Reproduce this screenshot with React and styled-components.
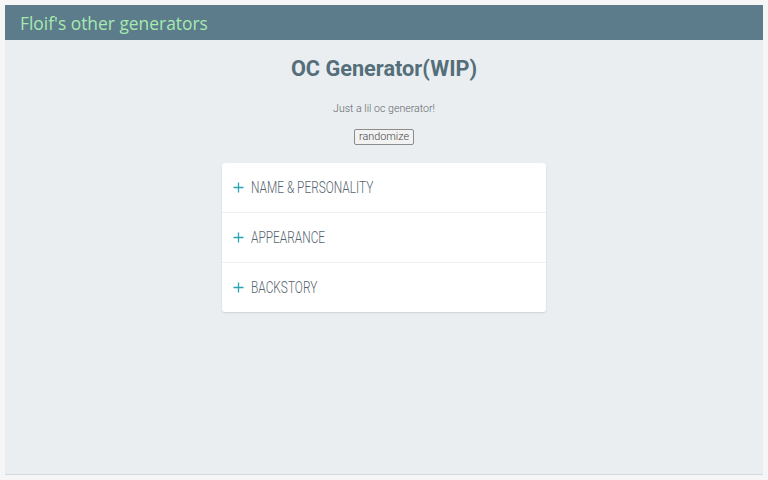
import React from 'react'
import styled, { createGlobalStyle } from 'styled-components'

const GlobalStyle = createGlobalStyle`
  html, body {
    margin: 0;
    padding: 0;
    background: #f6f6f6;
  }
  body {
    padding: 5px;
    font-family: Roboto, "Liberation Sans", sans-serif;
  }
`;

const Page = styled.div`
  height: 470px;
  display: flex;
  flex-direction: column;
  background: #eaeef1;
  border-bottom: 1px solid #d6d9dc;
  box-sizing: border-box;
`;

const TopBar = styled.div`
  height: 35px;
  background: #5c7b8b;
  display: flex;
  align-items: center;
  padding: 0 15px;
  color: #a6eab0;
  font-family: "Open Sans", sans-serif;
  font-size: 17.4px;
`;

const Main = styled.div`
  display: flex;
  flex-direction: column;
  align-items: center;
  padding-top: 14px;
`;

const Title = styled.h1`
  margin: 0;
  font-family: Roboto, sans-serif;
  font-weight: 700;
  font-size: 21.7px;
  color: #546e7a;
  line-height: 30px;
`;

const Subtitle = styled.p`
  margin: 18px 0 0;
  font-family: Roboto, sans-serif;
  font-weight: 300;
  font-size: 10.6px;
  color: #5f666b;
`;

const RandomButton = styled.button`
  margin-top: 14px;
  font-family: Roboto, sans-serif;
  font-weight: 300;
  font-size: 10.8px;
  color: #444;
  background: #f2f2f2;
  border: 1px solid #8c8c8c;
  border-radius: 2px;
  padding: 1px 4px;
  line-height: 12px;
`;

const Card = styled.div`
  margin-top: 18px;
  width: 324px;
  background: #fff;
  border-radius: 3px;
  box-shadow: 0 1px 2px rgba(0, 0, 0, 0.12);
  display: flex;
  flex-direction: column;
`;

const Row = styled.div`
  height: 49px;
  display: flex;
  align-items: center;
  gap: 7px;
  padding-left: 11px;
  border-top: ${p => (p.$first ? 'none' : '1px solid #edf0f2')};
`;

const Plus = styled.svg`
  width: 11px;
  height: 11px;
  flex: none;
`;

const Label = styled.span`
  font-family: Roboto, sans-serif;
  font-weight: 300;
  font-size: 16.5px;
  color: #56646e;
  transform: scaleX(0.72);
  transform-origin: left center;
  white-space: nowrap;
`;

const sections = ['NAME & PERSONALITY', 'APPEARANCE', 'BACKSTORY']

const App = () => {
  return (
    <>
      <GlobalStyle />
      <Page>
        <TopBar>Floif's other generators</TopBar>
        <Main>
          <Title>OC Generator(WIP)</Title>
          <Subtitle>Just a lil oc generator!</Subtitle>
          <RandomButton>randomize</RandomButton>
          <Card>
            {sections.map((s, i) => (
              <Row key={s} $first={i === 0}>
                <Plus viewBox="0 0 11 11">
                  <path d="M5.5 0.5v10M0.5 5.5h10" stroke="#2aa3b3" strokeWidth="1.3" />
                </Plus>
                <Label>{s}</Label>
              </Row>
            ))}
          </Card>
        </Main>
      </Page>
    </>
  )
}

export default App
